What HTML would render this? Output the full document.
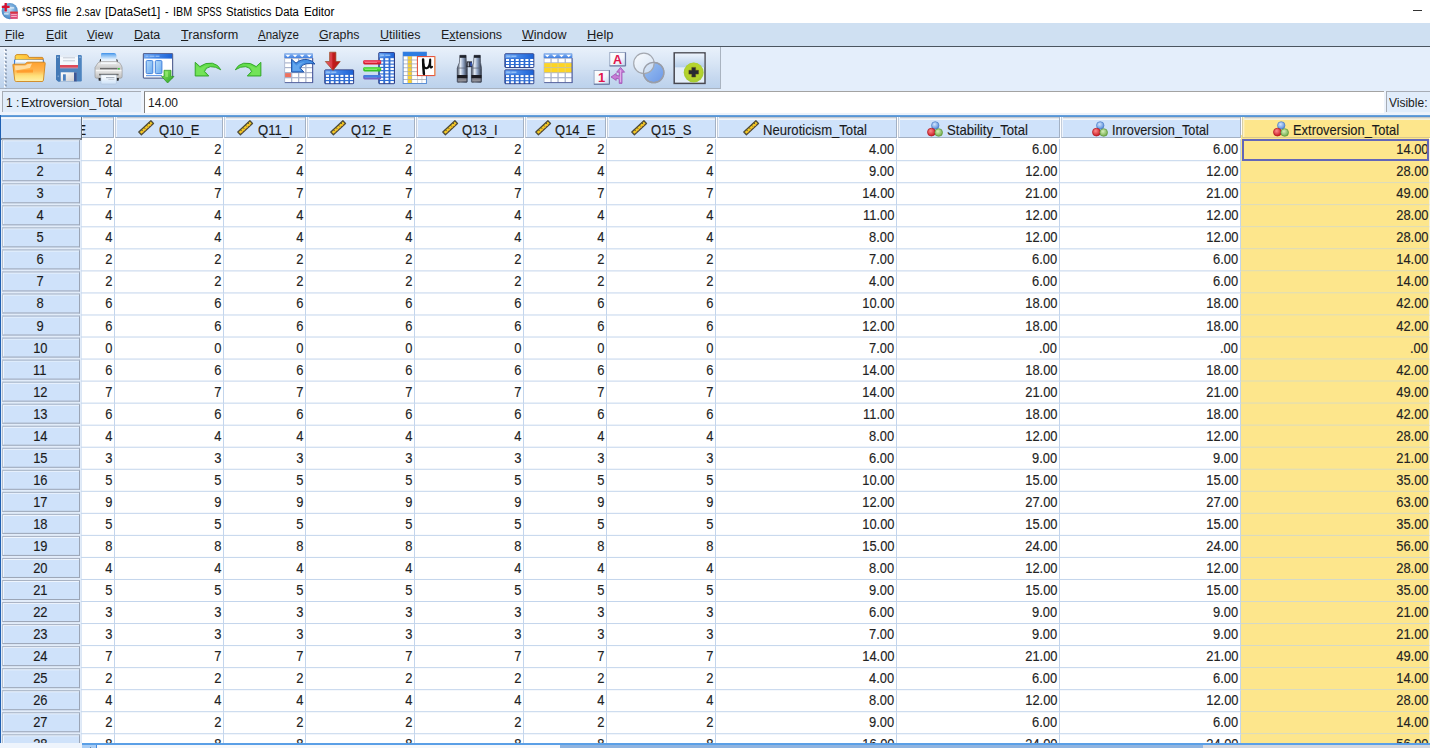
<!DOCTYPE html>
<html><head><meta charset="utf-8"><title>SPSS Data Editor</title>
<style>
*{box-sizing:border-box;margin:0;padding:0}
html,body{width:1430px;height:748px;overflow:hidden;background:#fff}
body{position:relative;font-family:"Liberation Sans",sans-serif;color:#1a1a1a}
#title{position:absolute;left:0;top:0;width:1430px;height:23px;background:#fff}
#title .txt{position:absolute;left:22px;top:5px;font-size:12px;line-height:15px;color:#000;white-space:nowrap;letter-spacing:-0.27px}
#title .tw span{position:absolute;top:5px;font-size:12px;line-height:15px;color:#000;white-space:nowrap;transform-origin:0 50%}
#title .min{position:absolute;left:1413px;top:10px;width:9px;height:1px;background:#333}
#menu{position:absolute;left:0;top:23px;width:1430px;height:23px;background:#cfe0f2}
#menu span{position:absolute;top:5.3px;transform-origin:0 50%;font-size:12px;line-height:15px;color:#1c1c1c;white-space:nowrap}
#menu u{text-decoration:underline;text-underline-offset:1px}
#menuline{position:absolute;left:0;top:46px;width:1430px;height:1.5px;background:#4b5560}
#tbar{position:absolute;left:0;top:47px;width:1430px;height:44.5px;background:#e4eefb}
#tbar .grad{position:absolute;left:0;top:0;width:720.5px;height:42px;background:linear-gradient(#e9f1fb 0%,#d8e5f5 40%,#c6d8ef 75%,#bcd2ec 100%);border-right:1px solid #a9b3c0;border-bottom:1px solid #a9b3c0}
#tbar .grip{position:absolute;left:3.6px;top:2.4px;width:3px;height:40px;background:radial-gradient(circle at 1.9px 1.2px,#8c9cb2 0,#8c9cb2 0.8px,transparent 1.1px),radial-gradient(circle at 1.1px 2px,#ffffff 0,#ffffff 0.8px,transparent 1.1px);background-size:3px 3.95px}
#fbar{position:absolute;left:0;top:91px;width:1430px;height:24px;background:#edf3fc}
#fbar .lab{position:absolute;left:2px;top:0.3px;width:139px;height:21px;background:#e1edfb;border-top:1.2px solid #a6acb5;border-left:1px solid #a6acb5;font-size:12.5px;line-height:21px;padding-left:3.4px;white-space:nowrap;color:#1a1a1a}
#fbar .val{position:absolute;left:144px;top:0.3px;width:1239.5px;height:21.8px;background:#fff;border-left:1px solid #808080;border-top:1.2px solid #a3a3a3;font-size:12.5px;line-height:21px;padding-left:3.4px;color:#1a1a1a}
#fbar .vis{position:absolute;left:1386px;top:0.3px;width:45px;height:21px;background:#e1edfb;border-top:1.2px solid #a6acb5;border-left:1px solid #a6acb5;font-size:12.5px;line-height:21px;padding-left:2.2px;white-space:nowrap;color:#1a1a1a}
#fbar .ft{display:inline-block;transform:scaleX(0.96);transform-origin:0 50%;position:relative;top:0.6px}
#grid{position:absolute;left:0;top:115px;width:1430px;height:633px;background:#fff;overflow:hidden}
#gridtop{position:absolute;left:0;top:114.9px;width:1430px;height:2.2px;background:linear-gradient(#6ea6de,#4f8fd2);z-index:5}
#leftedge{position:absolute;left:0;top:115px;width:1.3px;height:633px;background:#1f60b2;z-index:6}
#vl0{position:absolute;left:81px;top:24px;width:1px;height:604px;background:#dde8f6}
#rhbg{position:absolute;left:1.3px;top:24px;width:79.5px;height:609px;background:#e2ecf9}
.hc{position:absolute;top:1.8px;height:21.3px;background:linear-gradient(#c2c6cc 0,#c8ccd2 1.1px,#f3f7fc 1.7px,#f3f7fc 3px,#cfe2fa 3.5px);border-left:1px solid #c3cddb;box-shadow:inset 1px 0 0 #eef4fc;border-right:1px solid #a3b1c4;border-bottom:1px solid #a3b1c4;font-size:15.0px;line-height:22px;text-align:center;white-space:nowrap;overflow:visible;color:#1a1a1a}
.hc.clip{overflow:hidden}
.hc.sel{background:linear-gradient(#c8c6be 0,#cfcdc4 1.1px,#f8f3dc 1.7px,#f8f3dc 3px,#fde68c 3.5px);border-bottom-color:#d9c98c;border-right:none;border-left-color:#d8cfa4;box-shadow:inset 1.4px 0 0 #fdf2c4}
.hc .hi{display:inline-flex;align-items:center;height:22px;vertical-align:top;position:relative;top:2.3px;left:-0.6px}
.hc .ic{margin-right:4px;flex:none;position:relative;top:-1.3px}
.hc .ic.rl{top:-2.1px;left:0.7px}
.hc .hw{display:inline-block;height:22px;text-align:left;overflow:visible}
.hc .ht{display:inline-block;transform:scale(0.86,1);transform-origin:0 50%;white-space:nowrap;-webkit-text-stroke:0.15px #222}
.hc.clip .ht.r{position:absolute;right:27.3px;top:1.9px;transform-origin:100% 50%}
.corner{position:absolute;left:1.3px;top:1.8px;width:80.6px;height:22.9px;background:linear-gradient(#e4e8ee 0,#f6f9fd 0.8px,#f6f9fd 1.8px,#cfe2fa 2.3px);border-right:1px solid #6a7380;border-bottom:2px solid #7b8490}
.row{position:absolute;left:0;width:1430px;height:22.04px}
.rh{position:absolute;left:2.2px;top:0.4px;width:77.7px;height:19.6px;background:#cfe2fa;border:1px solid #9ba5b6;border-top-color:#a9b3c3;border-left-color:#b6c0ce;box-shadow:inset 1px 1px 0 #eef5fe;font-size:15.0px;line-height:19px;text-align:center;color:#1a1a1a;padding-right:1.6px}
.t{display:inline-block;transform:scale(0.86,1);white-space:nowrap;position:relative;top:-0.8px;-webkit-text-stroke:0.15px #222}
.rh .t{top:-1.0px}
.c .t{transform-origin:100% 50%}
.c{position:absolute;top:0;height:22.04px;border-right:1px solid #c3d5ec;border-bottom:1px solid #c3d5ec;font-size:15.0px;line-height:21.5px;text-align:right;padding-right:1.8px;white-space:nowrap;color:#222}
.c.y{background:#fde68c;border-bottom-color:#d3d9c9;border-right:1px solid #f4f0dc;padding-right:0.8px}
.selcell{position:absolute;left:1242px;top:24px;width:187px;height:22px;border:2px solid #6367b8;z-index:4}
#ybg{position:absolute;left:1241px;top:20px;width:188px;height:613px;background:#fde68c}
#hscroll{position:absolute;left:82px;top:743px;width:1348px;height:5px;background:#f6f8fb;z-index:7;border-top:2px solid #5a9fe6}
#hscroll .thumb{position:absolute;left:478px;top:0;width:643px;height:4px;background:#8fb4e0}
#hscroll .btn{position:absolute;left:0;top:0;width:14.5px;height:4px;background:#a8cdf5;border-right:1px solid #4a8ade}
#hscroll .btn:after{content:"";position:absolute;left:5.5px;top:1.6px;border:3px solid transparent;border-right-color:#2a3a5a;border-left:none}
#hscroll .rt{position:absolute;left:1121px;top:0;width:227px;height:4px;background:#d4d8e0}
#botleft{position:absolute;left:0;top:743.1px;width:82px;height:5px;background:#eef4fc;z-index:7}

</style></head>
<body>
<div id="title">
<svg style="position:absolute;left:0;top:0" width="20" height="22" viewBox="0 0 20 22"><defs><radialGradient id="tg" cx="0.5" cy="0.42" r="0.62"><stop offset="0" stop-color="#c4dcf2"/><stop offset="0.55" stop-color="#6ea6d8"/><stop offset="1" stop-color="#3f7cbc"/></radialGradient></defs><circle cx="9.7" cy="11.1" r="8.1" fill="url(#tg)"/><path d="M8 7.9h6.2M4 13.9h4.6M4.4 11.8h3" stroke="#eef5fc" stroke-width="1.1" opacity="0.9"/><rect x="10.3" y="11.7" width="7.5" height="7.2" fill="#e04a78"/><rect x="10.3" y="11.7" width="7.5" height="1.6" fill="#d8363e"/><path d="M11.2 14.6h5.6M11.2 16.5h5.6" stroke="#f6c0d0" stroke-width="0.9"/><path d="M5.7 3v8.5M1.8 6.95h7.8" stroke="#d8102e" stroke-width="2.3"/></svg>
<div class="tw"><span style="left:22.1px;transform:scaleX(0.800)">*SPSS</span><span style="left:55.7px;transform:scaleX(1.000)">file</span><span style="left:75.6px;transform:scaleX(0.858)">2.sav</span><span style="left:104.8px;transform:scaleX(0.975)">[DataSet1]</span><span style="left:164.9px;transform:scaleX(0.900)">-</span><span style="left:172.5px;transform:scaleX(0.897)">IBM</span><span style="left:196.5px;transform:scaleX(0.770)">SPSS</span><span style="left:225.5px;transform:scaleX(0.944)">Statistics</span><span style="left:275.4px;transform:scaleX(0.940)">Data</span><span style="left:304.4px;transform:scaleX(0.968)">Editor</span></div>
<div class="min"></div>
</div>
<div id="menu">
<span style="left:5px;transform:scaleX(1.0)"><u>F</u>ile</span>
<span style="left:46px;transform:scaleX(1.02)"><u>E</u>dit</span>
<span style="left:87px;transform:scaleX(1.0)"><u>V</u>iew</span>
<span style="left:133.8px;transform:scaleX(1.037)"><u>D</u>ata</span>
<span style="left:180.8px;transform:scaleX(1.054)"><u>T</u>ransform</span>
<span style="left:258.3px;transform:scaleX(0.96)"><u>A</u>nalyze</span>
<span style="left:319.4px;transform:scaleX(1.028)"><u>G</u>raphs</span>
<span style="left:380.3px;transform:scaleX(1.045)"><u>U</u>tilities</span>
<span style="left:441px;transform:scaleX(1.04)">E<u>x</u>tensions</span>
<span style="left:522.3px;transform:scaleX(1.04)"><u>W</u>indow</span>
<span style="left:587.2px;transform:scaleX(1.07)"><u>H</u>elp</span>
</div>
<div id="menuline"></div>
<div id="tbar"><div class="grad"></div><div class="grip"></div></div>
<div id="fbar"><div class="lab"><span class="ft">1 :</span><span class="ft" style="position:absolute;left:18.2px;top:0.6px;transform:scaleX(0.985)">Extroversion_Total</span></div><div class="val"><span class="ft">14.00</span></div><div class="vis"><span class="ft">Visible:</span></div></div>
<div id="gridtop"></div><div id="leftedge"></div>
<svg id="icons" style="position:absolute;left:0;top:47px" width="730" height="44" viewBox="0 47 730 44">
<defs>
<linearGradient id="fo" x1="0" y1="0" x2="0" y2="1"><stop offset="0" stop-color="#ffa02e"/><stop offset="0.45" stop-color="#ffb650"/><stop offset="0.7" stop-color="#ffe07a"/><stop offset="1" stop-color="#fff0a8"/></linearGradient>
<linearGradient id="fb" x1="0" y1="0" x2="1" y2="0"><stop offset="0" stop-color="#ffd94a"/><stop offset="1" stop-color="#ffa228"/></linearGradient>
<linearGradient id="pp" x1="0" y1="0" x2="0" y2="1"><stop offset="0" stop-color="#3d8fe8"/><stop offset="0.18" stop-color="#7ab6f2"/><stop offset="0.6" stop-color="#e4f1fd"/><stop offset="1" stop-color="#ffffff"/></linearGradient>
<linearGradient id="pb" x1="0" y1="0" x2="0" y2="1"><stop offset="0" stop-color="#f2f2f2"/><stop offset="0.4" stop-color="#c9c9c9"/><stop offset="0.55" stop-color="#e6e6e6"/><stop offset="1" stop-color="#bdbdbd"/></linearGradient>
<linearGradient id="po" x1="0" y1="0" x2="0" y2="1"><stop offset="0" stop-color="#ffffff"/><stop offset="1" stop-color="#cfe3f8"/></linearGradient>
<linearGradient id="th" x1="0" y1="0" x2="1" y2="0"><stop offset="0" stop-color="#6ea6f2"/><stop offset="0.5" stop-color="#3f82e6"/><stop offset="1" stop-color="#1c62d6"/></linearGradient>
<linearGradient id="gh" x1="0" y1="0" x2="0" y2="1"><stop offset="0" stop-color="#8db8f2"/><stop offset="1" stop-color="#3f7ee0"/></linearGradient>
<linearGradient id="bp" x1="0" y1="0" x2="1" y2="1"><stop offset="0" stop-color="#b8dcfa"/><stop offset="1" stop-color="#6aaaf0"/></linearGradient>
<linearGradient id="ga" x1="0" y1="0" x2="1" y2="1"><stop offset="0" stop-color="#8aea5e"/><stop offset="1" stop-color="#2aa026"/></linearGradient>
<linearGradient id="ra" x1="0" y1="0" x2="1" y2="0"><stop offset="0" stop-color="#e8606a"/><stop offset="0.45" stop-color="#d83a44"/><stop offset="0.5" stop-color="#c01c1c"/><stop offset="1" stop-color="#b81818"/></linearGradient>
<linearGradient id="bn" x1="0" y1="0" x2="1" y2="0"><stop offset="0" stop-color="#3e4656"/><stop offset="0.32" stop-color="#e4ecf6"/><stop offset="0.6" stop-color="#8ea2c2"/><stop offset="1" stop-color="#2e3644"/></linearGradient>
<linearGradient id="c1" x1="0" y1="0" x2="1" y2="1"><stop offset="0" stop-color="#ffffff"/><stop offset="1" stop-color="#d4e2f4"/></linearGradient>
<linearGradient id="c2" x1="0" y1="0" x2="1" y2="1"><stop offset="0" stop-color="#9cc2f0"/><stop offset="1" stop-color="#6c98e8"/></linearGradient>
<linearGradient id="sb" x1="0" y1="0" x2="0" y2="1"><stop offset="0" stop-color="#ecf3fc"/><stop offset="1" stop-color="#b4cde9"/></linearGradient>
<linearGradient id="lb" x1="0" y1="0" x2="1" y2="1"><stop offset="0" stop-color="#ffffff"/><stop offset="0.6" stop-color="#f2f6fc"/><stop offset="1" stop-color="#c2d4ec"/></linearGradient>
<linearGradient id="sh" x1="0" y1="0" x2="1" y2="1"><stop offset="0" stop-color="#ffffff"/><stop offset="1" stop-color="#c8c8cc"/></linearGradient>
</defs>
<g>
<path d="M15.2 59.5 L15.2 56.4 Q15.4 54.8 17 54.6 L26.6 54.6 Q27.8 54.8 28.2 56 L28.8 57.4 L42.2 57.4 Q43.2 57.6 43.2 58.6 L43.2 62 L15.2 62Z" fill="url(#fb)" stroke="#c9821c" stroke-width="0.9"/>
<path d="M14 59.6 L43.8 59.6 L43.8 65 L14 65Z" fill="#3b82dd"/>
<path d="M15.2 60 L42.8 60 L42.8 64.6 L15.2 64.6Z" fill="#f4f9ff"/>
<path d="M15.2 62.2 L42.8 62.2 L42.8 64.6 L15.2 64.6Z" fill="#cfe4f8"/>
<path d="M13.2 64.2 L24.2 64.2 Q25.4 64 26 63.2 Q26.6 62.3 27.8 62.2 L44.4 62.2 Q45.4 62.4 45.2 63.4 L43.4 80.4 Q43.2 81.5 42 81.5 L16.2 81.5 Q15 81.5 14.8 80.4 L12.9 65.2 Q12.8 64.3 13.2 64.2Z" fill="url(#fo)" stroke="#cf861c" stroke-width="0.9"/>
<path d="M14.6 65.6 L24.6 65.6 Q26.2 65.4 27 64.2 L32 63.6 L30 68 L15.4 70.5Z" fill="#ffe9b8" opacity="0.8"/>
<path d="M16.4 70.6 L33 69.4 L33 72.4 L16.8 72.8Z" fill="#ff9a2a" opacity="0.9"/>
</g>
<g>
<path d="M57.2 55 L80.6 55 Q81.8 55 81.8 56.2 L81.8 80.2 Q81.8 81.4 80.6 81.4 L58.2 81.4 L56 79.4 L56 56.2 Q56 55 57.2 55Z" fill="#4e84bf"/>
<path d="M56 57 L56 79.4 L58.2 81.4 L60 81.4 L60 55 L57.2 55 Q56 55 56 56.2Z" fill="#4379b6"/>
<rect x="60" y="55" width="18" height="10" fill="#f4f8fd"/>
<rect x="60" y="55" width="18" height="2" fill="#e4ecf6"/>
<path d="M63 57.8h12M63 60.8h12" stroke="#c2c9d4" stroke-width="1"/>
<rect x="60" y="65" width="18" height="2.8" fill="#de4858"/>
<rect x="60" y="67.6" width="18" height="0.7" fill="#f0a0a8"/>
<rect x="60.8" y="72.3" width="15.8" height="9.1" fill="url(#sh)"/>
<rect x="74" y="72.3" width="2.8" height="9.1" fill="#3a5696"/>
<rect x="63" y="74.3" width="2.8" height="6.4" fill="#4a80c0"/>
<rect x="57.2" y="56.6" width="1.3" height="1.3" fill="#a9c6e6"/><rect x="79.3" y="56.6" width="1.3" height="1.3" fill="#a9c6e6"/><rect x="57.6" y="75.5" width="1.2" height="1.6" fill="#7fa8d6"/>
</g>
<g>
<path d="M99.6 61 L100.4 59 L101.2 59 L101.2 63 L99.6 63Z M117.8 61 L117 59 L116.2 59 L116.2 63 L117.8 63Z" fill="#2a2a2a"/>
<path d="M101 54.2 Q101 53 102.2 53 L114.2 53 Q116.4 53.4 116.4 55.4 L116.4 63.6 L101 63.6Z" fill="url(#pp)"/>
<path d="M96 66 Q97.5 61.8 101 61.6 L116.6 61.6 Q120.4 62 121.6 66 L122.1 67.5 L122.1 76.6 Q122.1 78.2 120.6 78.2 L96.5 78.2 Q95 78.2 95 76.6 L95 67.5Z" fill="url(#pb)" stroke="#8f8f8f" stroke-width="0.6"/>
<path d="M101 63.2 L116.4 63.2" stroke="#f8fbff" stroke-width="1.2"/>
<path d="M100 68.6 L117.4 68.6" stroke="#6c6c6c" stroke-width="1.4"/>
<path d="M96 70.6 L121.4 70.6" stroke="#fafafa" stroke-width="0.9"/>
<rect x="117.8" y="68" width="2" height="1.6" fill="#3fc040"/>
<rect x="99" y="73.8" width="19.6" height="1.6" fill="#6e6e6e"/>
<path d="M98.6 78 L100.8 78 L100.8 81 L98.6 80.4Z M118.8 78 L116.6 78 L116.6 81 L118.8 80.4Z" fill="#2a2a2a"/>
<path d="M101 75 L116.4 75 L116.4 83.2 Q116.4 84 115.4 84 L102 84 Q101 84 101 83.2Z" fill="url(#po)" stroke="#a8bcd4" stroke-width="0.5"/>
<path d="M106 77.6h8.4" stroke="#9aa4b2" stroke-width="0.9"/><path d="M108.4 79.4h6" stroke="#c0c8d4" stroke-width="0.8"/>
</g>
<g>
<rect x="143.4" y="53.5" width="29.2" height="24.6" rx="0.8" fill="#ffffff" stroke="#5a6896" stroke-width="1.2"/>
<rect x="144" y="54" width="28" height="4.6" fill="url(#th)"/>
<path d="M145.5 56.2h3M149.5 56.2h5M155.5 56.2h4" stroke="#9cc4f6" stroke-width="1.6" opacity="0.8"/>
<rect x="146.2" y="60.6" width="6.6" height="13" rx="1" fill="url(#bp)" stroke="#3f80dc" stroke-width="1"/>
<rect x="155.3" y="60.6" width="6.6" height="13" rx="1" fill="url(#bp)" stroke="#3f80dc" stroke-width="1"/>
<path d="M146 75.7h16" stroke="#4a88e0" stroke-width="1"/>
<path d="M164 70.3 L171 70.3 L171 76.4 L174 76.4 L167.6 83 L161.6 76.4 L164 76.4Z" fill="url(#ga)" stroke="#2b9224" stroke-width="0.7"/>
<path d="M165.2 71.4 L168 71.4 L168 77 L165.4 77Z" fill="#a4f27e" opacity="0.6"/>
</g>
<path d="M195.2 62.3 L195.2 76 L208.8 76 L204.6 71.4 Q205.6 67.4 210.4 66.7 Q215.4 66.2 220.8 69.8 Q218.4 64.6 212.4 63.2 Q205.4 62.2 199.9 66.6Z" fill="#62dc4a" stroke="#2fa226" stroke-width="0.9" stroke-linejoin="round"/>
<path d="M196.2 65 L196.2 75 L206 75 L203.4 71.6 Q204.6 67 209.6 65.6 Q205 64.6 200.2 68.2Z" fill="#7be65e" opacity="0.7"/>
<g transform="translate(456.1 0) scale(-1 1)"><path d="M195.2 62.3 L195.2 76 L208.8 76 L204.6 71.4 Q205.6 67.4 210.4 66.7 Q215.4 66.2 220.8 69.8 Q218.4 64.6 212.4 63.2 Q205.4 62.2 199.9 66.6Z" fill="#62dc4a" stroke="#2fa226" stroke-width="0.9" stroke-linejoin="round"/><path d="M196.2 65 L196.2 75 L206 75 L203.4 71.6 Q204.6 67 209.6 65.6 Q205 64.6 200.2 68.2Z" fill="#7be65e" opacity="0.7"/></g>
<rect x="284.3" y="53.3" width="28.6" height="29.6" rx="0.8" fill="#aab4cc"/>
<rect x="284.3" y="53.3" width="28.6" height="4.8" rx="0.8" fill="url(#gh)"/>
<path d="M285.5 54.8 L290.3 54.8 L287.9 57.2Z" fill="#ffffff"/>
<path d="M292.6 54.8 L297.4 54.8 L295.0 57.2Z" fill="#ffffff"/>
<path d="M299.7 54.8 L304.5 54.8 L302.1 57.2Z" fill="#ffffff"/>
<path d="M306.9 54.8 L311.7 54.8 L309.3 57.2Z" fill="#ffffff"/>
<rect x="285.10" y="58.80" width="5.90" height="3.50" fill="#ffffff"/>
<rect x="292.30" y="58.80" width="5.70" height="3.50" fill="#ffffff"/>
<rect x="299.30" y="58.80" width="5.90" height="3.50" fill="#ffffff"/>
<rect x="306.50" y="58.80" width="5.90" height="3.50" fill="#ffffff"/>
<rect x="285.10" y="63.50" width="5.90" height="3.50" fill="#ffffff"/>
<rect x="292.30" y="63.50" width="5.70" height="3.50" fill="#ffffff"/>
<rect x="299.30" y="63.50" width="5.90" height="3.50" fill="#ffffff"/>
<rect x="306.50" y="63.50" width="5.90" height="3.50" fill="#ffffff"/>
<rect x="285.10" y="68.20" width="5.90" height="3.80" fill="#ffffff"/>
<rect x="292.30" y="68.20" width="5.70" height="3.80" fill="#ffffff"/>
<rect x="299.30" y="68.20" width="5.90" height="3.80" fill="#ffffff"/>
<rect x="306.50" y="68.20" width="5.90" height="3.80" fill="#ffffff"/>
<rect x="285.10" y="73.20" width="5.90" height="3.90" fill="#f0705c"/>
<rect x="292.30" y="73.20" width="5.70" height="3.90" fill="#ffffff"/>
<rect x="299.30" y="73.20" width="5.90" height="3.90" fill="#ffffff"/>
<rect x="306.50" y="73.20" width="5.90" height="3.90" fill="#ffffff"/>
<rect x="285.10" y="78.30" width="5.90" height="4.10" fill="#ffffff"/>
<rect x="292.30" y="78.30" width="5.70" height="4.10" fill="#ffffff"/>
<rect x="299.30" y="78.30" width="5.90" height="4.10" fill="#ffffff"/>
<rect x="306.50" y="78.30" width="5.90" height="4.10" fill="#ffffff"/>
<path d="M312.7 58.1 V82.9" stroke="#3c4c96" stroke-width="1"/>
<path d="M284.8 82.6 H312.9" stroke="#4c5a9a" stroke-width="0.9"/>
<path d="M291.6 59.2 L291.6 72 L303.8 72 L300.4 68.2 Q301.8 64.6 306 63.8 Q310.6 63.2 315 64 Q312.6 60.4 307.4 59.6 Q300.6 58.8 296 63.2Z" fill="#4690e4" stroke="#1f52a8" stroke-width="1" stroke-linejoin="round"/>
<path d="M292.8 62 L292.8 70.8 L301 70.8 L298.8 68 Q300 64 304.6 62.4 Q300.2 61.8 296.4 65.4Z" fill="#72b0f2" opacity="0.7"/>
<rect x="324.8" y="69.9" width="28.8" height="13.8" rx="0.6" fill="#2e6cd2" stroke="#2c3c84" stroke-width="1"/>
<rect x="325.3" y="70.4" width="27.8" height="3.8" fill="url(#th)"/>
<path d="M326.3 72.2h4M331.3 72.2h5" stroke="#a4ccf8" stroke-width="1.5" opacity="0.75"/>
<rect x="325.90" y="74.90" width="3.10" height="2.00" fill="#ffffff"/>
<rect x="330.72" y="74.90" width="3.10" height="2.00" fill="#ffffff"/>
<rect x="335.53" y="74.90" width="3.10" height="2.00" fill="#ffffff"/>
<rect x="340.35" y="74.90" width="3.10" height="2.00" fill="#ffffff"/>
<rect x="345.17" y="74.90" width="3.10" height="2.00" fill="#ffffff"/>
<rect x="349.98" y="74.90" width="3.10" height="2.00" fill="#ffffff"/>
<rect x="325.90" y="78.03" width="3.10" height="2.00" fill="#ffffff"/>
<rect x="330.72" y="78.03" width="3.10" height="2.00" fill="#ffffff"/>
<rect x="335.53" y="78.03" width="3.10" height="2.00" fill="#ffffff"/>
<rect x="340.35" y="78.03" width="3.10" height="2.00" fill="#ffffff"/>
<rect x="345.17" y="78.03" width="3.10" height="2.00" fill="#ffffff"/>
<rect x="349.98" y="78.03" width="3.10" height="2.00" fill="#ffffff"/>
<rect x="325.90" y="81.17" width="3.10" height="2.00" fill="#ffffff"/>
<rect x="330.72" y="81.17" width="3.10" height="2.00" fill="#ffffff"/>
<rect x="335.53" y="81.17" width="3.10" height="2.00" fill="#ffffff"/>
<rect x="340.35" y="81.17" width="3.10" height="2.00" fill="#ffffff"/>
<rect x="345.17" y="81.17" width="3.10" height="2.00" fill="#ffffff"/>
<rect x="349.98" y="81.17" width="3.10" height="2.00" fill="#ffffff"/>
<path d="M329.6 52.2 L335.9 52.2 L335.9 61.5 L340.2 61.5 L333 70.4 L325.3 61.5 L329.6 61.5Z" fill="url(#ra)" stroke="#9a4a22" stroke-width="0.7" stroke-linejoin="round"/>
<rect x="378.8" y="52.6" width="15.7" height="31.1" rx="0.6" fill="#2e6cd2" stroke="#2c3c84" stroke-width="1"/>
<rect x="379.3" y="53.1" width="14.7" height="4.4" fill="url(#th)"/>
<path d="M380.3 55.2h4M385.3 55.2h5" stroke="#a4ccf8" stroke-width="1.5" opacity="0.75"/>
<rect x="379.90" y="58.20" width="3.40" height="2.10" fill="#ffffff"/>
<rect x="385.17" y="58.20" width="3.40" height="2.10" fill="#ffffff"/>
<rect x="390.43" y="58.20" width="3.40" height="2.10" fill="#ffffff"/>
<rect x="379.90" y="61.46" width="3.40" height="2.10" fill="#ffffff"/>
<rect x="385.17" y="61.46" width="3.40" height="2.10" fill="#ffffff"/>
<rect x="390.43" y="61.46" width="3.40" height="2.10" fill="#ffffff"/>
<rect x="379.90" y="64.73" width="3.40" height="2.10" fill="#ffffff"/>
<rect x="385.17" y="64.73" width="3.40" height="2.10" fill="#ffffff"/>
<rect x="390.43" y="64.73" width="3.40" height="2.10" fill="#ffffff"/>
<rect x="379.90" y="67.99" width="3.40" height="2.10" fill="#ffffff"/>
<rect x="385.17" y="67.99" width="3.40" height="2.10" fill="#ffffff"/>
<rect x="390.43" y="67.99" width="3.40" height="2.10" fill="#ffffff"/>
<rect x="379.90" y="71.25" width="3.40" height="2.10" fill="#ffffff"/>
<rect x="385.17" y="71.25" width="3.40" height="2.10" fill="#ffffff"/>
<rect x="390.43" y="71.25" width="3.40" height="2.10" fill="#ffffff"/>
<rect x="379.90" y="74.51" width="3.40" height="2.10" fill="#ffffff"/>
<rect x="385.17" y="74.51" width="3.40" height="2.10" fill="#ffffff"/>
<rect x="390.43" y="74.51" width="3.40" height="2.10" fill="#ffffff"/>
<rect x="379.90" y="77.78" width="3.40" height="2.10" fill="#ffffff"/>
<rect x="385.17" y="77.78" width="3.40" height="2.10" fill="#ffffff"/>
<rect x="390.43" y="77.78" width="3.40" height="2.10" fill="#ffffff"/>
<rect x="379.90" y="81.04" width="3.40" height="2.10" fill="#ffffff"/>
<rect x="385.17" y="81.04" width="3.40" height="2.10" fill="#ffffff"/>
<rect x="390.43" y="81.04" width="3.40" height="2.10" fill="#ffffff"/>
<rect x="363.2" y="60.2" width="18" height="4.3" rx="1.4" fill="#d41c2c"/>
<rect x="363.6" y="60.4" width="17.2" height="2.2" rx="1.1" fill="#f2486a"/>
<path d="M365 62.4h12" stroke="#ffa0a8" stroke-width="0.8" opacity="0.8"/>
<rect x="363.2" y="67.2" width="18" height="4.3" rx="1.4" fill="#34c226"/>
<rect x="363.6" y="67.4" width="17.2" height="2.2" rx="1.1" fill="#5ee048"/>
<path d="M365 69.4h12" stroke="#b0f49c" stroke-width="0.8" opacity="0.8"/>
<rect x="363.2" y="75.1" width="18" height="4.3" rx="1.4" fill="#7462c4"/>
<rect x="363.6" y="75.3" width="17.2" height="2.2" rx="1.1" fill="#3d82e4"/>
<path d="M365 77.3h12" stroke="#7a90e0" stroke-width="0.8" opacity="0.8"/>
<rect x="403.1" y="52.1" width="23.3" height="31.5" fill="#a4a8b0" stroke="#4a86d8" stroke-width="0.8"/>
<rect x="403.1" y="52.1" width="23.3" height="3.9" fill="#2c7ce2"/>
<rect x="403.70" y="56.50" width="3.80" height="3.1" fill="#ffffff"/>
<rect x="408.00" y="56.50" width="3.60" height="3.1" fill="#f8d232"/>
<rect x="412.10" y="56.50" width="4.90" height="3.1" fill="#ffffff"/>
<rect x="417.50" y="56.50" width="4.20" height="3.1" fill="#ffffff"/>
<rect x="422.20" y="56.50" width="3.70" height="3.1" fill="#ffffff"/>
<rect x="403.70" y="60.40" width="3.80" height="3.1" fill="#ffffff"/>
<rect x="408.00" y="60.40" width="3.60" height="3.1" fill="#f8d232"/>
<rect x="412.10" y="60.40" width="4.90" height="3.1" fill="#ffffff"/>
<rect x="417.50" y="60.40" width="4.20" height="3.1" fill="#ffffff"/>
<rect x="422.20" y="60.40" width="3.70" height="3.1" fill="#ffffff"/>
<rect x="403.70" y="64.30" width="3.80" height="3.1" fill="#ffffff"/>
<rect x="408.00" y="64.30" width="3.60" height="3.1" fill="#f8d232"/>
<rect x="412.10" y="64.30" width="4.90" height="3.1" fill="#ffffff"/>
<rect x="417.50" y="64.30" width="4.20" height="3.1" fill="#ffffff"/>
<rect x="422.20" y="64.30" width="3.70" height="3.1" fill="#ffffff"/>
<rect x="403.70" y="68.20" width="3.80" height="3.1" fill="#ffffff"/>
<rect x="408.00" y="68.20" width="3.60" height="3.1" fill="#f8d232"/>
<rect x="412.10" y="68.20" width="4.90" height="3.1" fill="#ffffff"/>
<rect x="417.50" y="68.20" width="4.20" height="3.1" fill="#ffffff"/>
<rect x="422.20" y="68.20" width="3.70" height="3.1" fill="#ffffff"/>
<rect x="403.70" y="72.10" width="3.80" height="3.1" fill="#ffffff"/>
<rect x="408.00" y="72.10" width="3.60" height="3.1" fill="#f8d232"/>
<rect x="412.10" y="72.10" width="4.90" height="3.1" fill="#ffffff"/>
<rect x="417.50" y="72.10" width="4.20" height="3.1" fill="#ffffff"/>
<rect x="422.20" y="72.10" width="3.70" height="3.1" fill="#ffffff"/>
<rect x="403.70" y="76.00" width="3.80" height="3.1" fill="#ffffff"/>
<rect x="408.00" y="76.00" width="3.60" height="3.1" fill="#f8d232"/>
<rect x="412.10" y="76.00" width="4.90" height="3.1" fill="#ffffff"/>
<rect x="417.50" y="76.00" width="4.20" height="3.1" fill="#ffffff"/>
<rect x="422.20" y="76.00" width="3.70" height="3.1" fill="#ffffff"/>
<rect x="403.70" y="79.90" width="3.80" height="3.1" fill="#ffffff"/>
<rect x="408.00" y="79.90" width="3.60" height="3.1" fill="#f8d232"/>
<rect x="412.10" y="79.90" width="4.90" height="3.1" fill="#ffffff"/>
<rect x="417.50" y="79.90" width="4.20" height="3.1" fill="#ffffff"/>
<rect x="422.20" y="79.90" width="3.70" height="3.1" fill="#ffffff"/>
<rect x="417.4" y="56.6" width="17.4" height="19" fill="#ffffff" stroke="#e4442e" stroke-width="1"/>
<path d="M434.8 56.6V75.6" stroke="#f0a25e" stroke-width="1"/>
<path d="M423.1 59.4 Q423.2 67 423.9 74" stroke="#0c0c0c" stroke-width="2.5" stroke-linecap="round" fill="none"/>
<path d="M423.4 64 Q423.6 68.4 426.6 68.2 Q429.8 67.6 430.2 59.6 Q430 66.4 430.6 67.2 Q431.2 67.8 432 66.8" stroke="#0c0c0c" stroke-width="2.1" stroke-linecap="round" stroke-linejoin="round" fill="none"/>
<path d="M459.8 55.3 L466.1 55.3 L466.3 62.5 Q467.1 66 467.3 68.4 L467.3 81.6 Q467.3 82.4 466.5 82.4 L458.0 82.4 Q457.2 82.4 457.2 81.6 L457.2 68.4 Q457.8 66 459.4 62.5Z" fill="url(#bn)" stroke="#3a4250" stroke-width="0.6"/>
<rect x="459.8" y="55.2" width="6.3" height="2.6" fill="#20242c"/>
<rect x="457.2" y="67.6" width="10.1" height="0.9" fill="#5a6274" opacity="0.8"/>
<rect x="457.2" y="75" width="10.1" height="3.2" fill="#1c1c22"/>
<rect x="458.1" y="78.2" width="8.3" height="3.6" fill="#4e4e56"/>
<path d="M458.1 79.2h8.3M458.1 80.7h8.3" stroke="#b4b4bc" stroke-width="0.8"/>
<path d="M474.0 55.3 L480.3 55.3 L480.5 62.5 Q481.3 66 481.5 68.4 L481.5 81.6 Q481.5 82.4 480.7 82.4 L472.2 82.4 Q471.4 82.4 471.4 81.6 L471.4 68.4 Q472.0 66 473.6 62.5Z" fill="url(#bn)" stroke="#3a4250" stroke-width="0.6"/>
<rect x="474.0" y="55.2" width="6.3" height="2.6" fill="#20242c"/>
<rect x="471.4" y="67.6" width="10.1" height="0.9" fill="#5a6274" opacity="0.8"/>
<rect x="471.4" y="75" width="10.1" height="3.2" fill="#1c1c22"/>
<rect x="472.3" y="78.2" width="8.3" height="3.6" fill="#4e4e56"/>
<path d="M472.3 79.2h8.3M472.3 80.7h8.3" stroke="#b4b4bc" stroke-width="0.8"/>
<rect x="466.6" y="61.4" width="5.4" height="5.8" fill="#1c1e26"/>
<rect x="467.6" y="62.4" width="1.6" height="4" fill="#9aa2b4"/>
<rect x="470.2" y="62.4" width="1.8" height="4" fill="#3858b0"/>
<rect x="504.9" y="53.8" width="28.9" height="13.6" rx="0.6" fill="#2e6cd2" stroke="#2c3c84" stroke-width="1"/>
<rect x="505.4" y="54.3" width="27.9" height="4.0" fill="url(#th)"/>
<path d="M506.4 56.2h4M511.4 56.2h5" stroke="#a4ccf8" stroke-width="1.5" opacity="0.75"/>
<rect x="506.00" y="59.00" width="3.10" height="2.00" fill="#ffffff"/>
<rect x="510.83" y="59.00" width="3.10" height="2.00" fill="#ffffff"/>
<rect x="515.67" y="59.00" width="3.10" height="2.00" fill="#ffffff"/>
<rect x="520.50" y="59.00" width="3.10" height="2.00" fill="#ffffff"/>
<rect x="525.33" y="59.00" width="3.10" height="2.00" fill="#ffffff"/>
<rect x="530.17" y="59.00" width="3.10" height="2.00" fill="#ffffff"/>
<rect x="506.00" y="62.00" width="3.10" height="2.00" fill="#ffffff"/>
<rect x="510.83" y="62.00" width="3.10" height="2.00" fill="#ffffff"/>
<rect x="515.67" y="62.00" width="3.10" height="2.00" fill="#ffffff"/>
<rect x="520.50" y="62.00" width="3.10" height="2.00" fill="#ffffff"/>
<rect x="525.33" y="62.00" width="3.10" height="2.00" fill="#ffffff"/>
<rect x="530.17" y="62.00" width="3.10" height="2.00" fill="#ffffff"/>
<rect x="506.00" y="65.00" width="3.10" height="2.00" fill="#ffffff"/>
<rect x="510.83" y="65.00" width="3.10" height="2.00" fill="#ffffff"/>
<rect x="515.67" y="65.00" width="3.10" height="2.00" fill="#ffffff"/>
<rect x="520.50" y="65.00" width="3.10" height="2.00" fill="#ffffff"/>
<rect x="525.33" y="65.00" width="3.10" height="2.00" fill="#ffffff"/>
<rect x="530.17" y="65.00" width="3.10" height="2.00" fill="#ffffff"/>
<rect x="504.9" y="69.9" width="28.9" height="13.8" rx="0.6" fill="#2e6cd2" stroke="#2c3c84" stroke-width="1"/>
<rect x="505.4" y="70.4" width="27.9" height="4.0" fill="url(#th)"/>
<path d="M506.4 72.3h4M511.4 72.3h5" stroke="#a4ccf8" stroke-width="1.5" opacity="0.75"/>
<rect x="506.00" y="75.10" width="3.10" height="2.00" fill="#ffffff"/>
<rect x="510.83" y="75.10" width="3.10" height="2.00" fill="#ffffff"/>
<rect x="515.67" y="75.10" width="3.10" height="2.00" fill="#ffffff"/>
<rect x="520.50" y="75.10" width="3.10" height="2.00" fill="#ffffff"/>
<rect x="525.33" y="75.10" width="3.10" height="2.00" fill="#ffffff"/>
<rect x="530.17" y="75.10" width="3.10" height="2.00" fill="#ffffff"/>
<rect x="506.00" y="78.17" width="3.10" height="2.00" fill="#ffffff"/>
<rect x="510.83" y="78.17" width="3.10" height="2.00" fill="#ffffff"/>
<rect x="515.67" y="78.17" width="3.10" height="2.00" fill="#ffffff"/>
<rect x="520.50" y="78.17" width="3.10" height="2.00" fill="#ffffff"/>
<rect x="525.33" y="78.17" width="3.10" height="2.00" fill="#ffffff"/>
<rect x="530.17" y="78.17" width="3.10" height="2.00" fill="#ffffff"/>
<rect x="506.00" y="81.23" width="3.10" height="2.00" fill="#ffffff"/>
<rect x="510.83" y="81.23" width="3.10" height="2.00" fill="#ffffff"/>
<rect x="515.67" y="81.23" width="3.10" height="2.00" fill="#ffffff"/>
<rect x="520.50" y="81.23" width="3.10" height="2.00" fill="#ffffff"/>
<rect x="525.33" y="81.23" width="3.10" height="2.00" fill="#ffffff"/>
<rect x="530.17" y="81.23" width="3.10" height="2.00" fill="#ffffff"/>
<rect x="543.7" y="53.3" width="28.6" height="29.6" rx="0.8" fill="#aab4cc"/>
<rect x="543.7" y="53.3" width="28.6" height="4.8" rx="0.8" fill="url(#gh)"/>
<path d="M544.9 54.8 L549.7 54.8 L547.3 57.2Z" fill="#ffffff"/>
<path d="M552.0 54.8 L556.8 54.8 L554.4 57.2Z" fill="#ffffff"/>
<path d="M559.1 54.8 L563.9 54.8 L561.5 57.2Z" fill="#ffffff"/>
<path d="M566.3 54.8 L571.1 54.8 L568.7 57.2Z" fill="#ffffff"/>
<rect x="544.20" y="63.10" width="27.6" height="4.30" fill="#f2d458"/>
<rect x="544.20" y="67.80" width="27.6" height="4.60" fill="#f2d458"/>
<rect x="544.50" y="58.80" width="5.90" height="3.50" fill="#ffffff"/>
<rect x="551.70" y="58.80" width="5.70" height="3.50" fill="#ffffff"/>
<rect x="558.70" y="58.80" width="5.90" height="3.50" fill="#ffffff"/>
<rect x="565.90" y="58.80" width="5.90" height="3.50" fill="#ffffff"/>
<rect x="544.50" y="63.50" width="5.90" height="3.50" fill="#fdd524"/>
<rect x="551.70" y="63.50" width="5.70" height="3.50" fill="#fdd524"/>
<rect x="558.70" y="63.50" width="5.90" height="3.50" fill="#fdd524"/>
<rect x="565.90" y="63.50" width="5.90" height="3.50" fill="#fdd524"/>
<rect x="544.50" y="68.20" width="5.90" height="3.80" fill="#fdd524"/>
<rect x="551.70" y="68.20" width="5.70" height="3.80" fill="#fdd524"/>
<rect x="558.70" y="68.20" width="5.90" height="3.80" fill="#fdd524"/>
<rect x="565.90" y="68.20" width="5.90" height="3.80" fill="#fdd524"/>
<rect x="544.50" y="73.20" width="5.90" height="3.90" fill="#ffffff"/>
<rect x="551.70" y="73.20" width="5.70" height="3.90" fill="#ffffff"/>
<rect x="558.70" y="73.20" width="5.90" height="3.90" fill="#ffffff"/>
<rect x="565.90" y="73.20" width="5.90" height="3.90" fill="#ffffff"/>
<rect x="544.50" y="78.30" width="5.90" height="4.10" fill="#ffffff"/>
<rect x="551.70" y="78.30" width="5.70" height="4.10" fill="#ffffff"/>
<rect x="558.70" y="78.30" width="5.90" height="4.10" fill="#ffffff"/>
<rect x="565.90" y="78.30" width="5.90" height="4.10" fill="#ffffff"/>
<path d="M572.1 58.1 V82.9" stroke="#3c4c96" stroke-width="1"/>
<path d="M544.2 82.6 H572.3" stroke="#4c5a9a" stroke-width="0.9"/>
<rect x="609.8" y="52.5" width="15.4" height="13.2" fill="url(#lb)" stroke="#8c9cb8" stroke-width="0.8"/>
<path d="M609.6 66H625.6V52.4" stroke="#6676a0" stroke-width="1" fill="none"/>
<text x="617.6" y="63.9" text-anchor="middle" font-family="Liberation Sans, sans-serif" font-weight="bold" font-size="12.5" fill="#e0144c">A</text>
<rect x="594.1" y="70.4" width="15" height="13.6" fill="url(#lb)" stroke="#8c9cb8" stroke-width="0.8"/>
<path d="M593.9 84.3H609.5V70.2" stroke="#6676a0" stroke-width="1" fill="none"/>
<text x="601.6" y="82" text-anchor="middle" font-family="Liberation Sans, sans-serif" font-weight="bold" font-size="13" fill="#e0144c">1</text>
<path d="M620.5 67.3 L624.6 72.2 L622 72.2 L622 83.4 L619.2 83.4 L619.2 79.6 Q618.6 78.2 616.2 78.4 L616.2 80.4 L611 77 L616.2 73.4 L616.2 75.4 Q618.4 75.4 619.2 76.2 L619.2 72.2 L616.6 72.2Z" fill="#c67cd6" stroke="#9a48ac" stroke-width="0.7" stroke-linejoin="round"/>
<path d="M620.6 70v12" stroke="#e8c0f0" stroke-width="0.8"/>
<circle cx="653.7" cy="72.5" r="10.2" fill="url(#c2)" stroke="#9a9ea8" stroke-width="1.2"/>
<circle cx="643.9" cy="63.4" r="10.2" fill="url(#c1)" fill-opacity="0.82" stroke="#a4a8b0" stroke-width="1.2"/>
<circle cx="653.7" cy="72.5" r="10.2" fill="none" stroke="#9a9ea8" stroke-width="1.2"/>
<rect x="674.2" y="52.9" width="30.8" height="30.5" fill="#e4eefa" stroke="#484850" stroke-width="1.5"/>
<rect x="675" y="53.7" width="29.2" height="13.6" fill="url(#sb)"/>
<circle cx="693.7" cy="72.5" r="10" fill="#a8cc34"/>
<circle cx="693.7" cy="71.4" r="8.6" fill="#b8d42c" opacity="0.8"/>
<path d="M691.8 67.4h3.8v2.9h2.9v3.8h-2.9v2.9h-3.8v-2.9h-2.9v-3.8h2.9Z" fill="#2a2a32" stroke="#5a4a1a" stroke-width="0.5"/>
</svg>
<div id="grid">
<div id="rhbg"></div><div id="vl0"></div><div id="ybg"></div>
<div class="hc clip" style="left:81.0px;width:33.0px"><span class="ht r">E</span></div>
<div class="hc " style="left:115.0px;width:108.0px"><span class="hi"><svg class="ic rl" width="17" height="16" viewBox="0 0 17 16"><polygon points="12.9,0.7 15.5,3.5 3.4,14.8 0.8,12" fill="#f2cc20" stroke="#4e4a38" stroke-width="1.25" stroke-linejoin="round"/><path d="M3.4 9.7l1.3 1.4M5.9 7.4l1.3 1.4M8.4 5.1l1.3 1.4M10.9 2.8l1.3 1.4" stroke="#5a5430" stroke-width="1"/><path d="M4.4 12.4l0.9-0.9M6.9 10.1l0.9-0.9M9.4 7.8l0.9-0.9M11.9 5.5l1-1" stroke="#fba93a" stroke-width="1.2"/></svg><span class="hw" style="width:40.54px"><span class="ht" style="transform:scale(0.868,1)">Q10_E</span></span></span></div>
<div class="hc " style="left:224.0px;width:82.0px"><span class="hi"><svg class="ic rl" width="17" height="16" viewBox="0 0 17 16"><polygon points="12.9,0.7 15.5,3.5 3.4,14.8 0.8,12" fill="#f2cc20" stroke="#4e4a38" stroke-width="1.25" stroke-linejoin="round"/><path d="M3.4 9.7l1.3 1.4M5.9 7.4l1.3 1.4M8.4 5.1l1.3 1.4M10.9 2.8l1.3 1.4" stroke="#5a5430" stroke-width="1"/><path d="M4.4 12.4l0.9-0.9M6.9 10.1l0.9-0.9M9.4 7.8l0.9-0.9M11.9 5.5l1-1" stroke="#fba93a" stroke-width="1.2"/></svg><span class="hw" style="width:34.66px"><span class="ht" style="transform:scale(0.872,1)">Q11_I</span></span></span></div>
<div class="hc " style="left:307.0px;width:108.0px"><span class="hi"><svg class="ic rl" width="17" height="16" viewBox="0 0 17 16"><polygon points="12.9,0.7 15.5,3.5 3.4,14.8 0.8,12" fill="#f2cc20" stroke="#4e4a38" stroke-width="1.25" stroke-linejoin="round"/><path d="M3.4 9.7l1.3 1.4M5.9 7.4l1.3 1.4M8.4 5.1l1.3 1.4M10.9 2.8l1.3 1.4" stroke="#5a5430" stroke-width="1"/><path d="M4.4 12.4l0.9-0.9M6.9 10.1l0.9-0.9M9.4 7.8l0.9-0.9M11.9 5.5l1-1" stroke="#fba93a" stroke-width="1.2"/></svg><span class="hw" style="width:40.54px"><span class="ht" style="transform:scale(0.868,1)">Q12_E</span></span></span></div>
<div class="hc " style="left:416.0px;width:108.0px"><span class="hi"><svg class="ic rl" width="17" height="16" viewBox="0 0 17 16"><polygon points="12.9,0.7 15.5,3.5 3.4,14.8 0.8,12" fill="#f2cc20" stroke="#4e4a38" stroke-width="1.25" stroke-linejoin="round"/><path d="M3.4 9.7l1.3 1.4M5.9 7.4l1.3 1.4M8.4 5.1l1.3 1.4M10.9 2.8l1.3 1.4" stroke="#5a5430" stroke-width="1"/><path d="M4.4 12.4l0.9-0.9M6.9 10.1l0.9-0.9M9.4 7.8l0.9-0.9M11.9 5.5l1-1" stroke="#fba93a" stroke-width="1.2"/></svg><span class="hw" style="width:35.63px"><span class="ht" style="transform:scale(0.872,1)">Q13_I</span></span></span></div>
<div class="hc " style="left:525.0px;width:81.0px"><span class="hi"><svg class="ic rl" width="17" height="16" viewBox="0 0 17 16"><polygon points="12.9,0.7 15.5,3.5 3.4,14.8 0.8,12" fill="#f2cc20" stroke="#4e4a38" stroke-width="1.25" stroke-linejoin="round"/><path d="M3.4 9.7l1.3 1.4M5.9 7.4l1.3 1.4M8.4 5.1l1.3 1.4M10.9 2.8l1.3 1.4" stroke="#5a5430" stroke-width="1"/><path d="M4.4 12.4l0.9-0.9M6.9 10.1l0.9-0.9M9.4 7.8l0.9-0.9M11.9 5.5l1-1" stroke="#fba93a" stroke-width="1.2"/></svg><span class="hw" style="width:40.54px"><span class="ht" style="transform:scale(0.868,1)">Q14_E</span></span></span></div>
<div class="hc " style="left:607.0px;width:109.0px"><span class="hi"><svg class="ic rl" width="17" height="16" viewBox="0 0 17 16"><polygon points="12.9,0.7 15.5,3.5 3.4,14.8 0.8,12" fill="#f2cc20" stroke="#4e4a38" stroke-width="1.25" stroke-linejoin="round"/><path d="M3.4 9.7l1.3 1.4M5.9 7.4l1.3 1.4M8.4 5.1l1.3 1.4M10.9 2.8l1.3 1.4" stroke="#5a5430" stroke-width="1"/><path d="M4.4 12.4l0.9-0.9M6.9 10.1l0.9-0.9M9.4 7.8l0.9-0.9M11.9 5.5l1-1" stroke="#fba93a" stroke-width="1.2"/></svg><span class="hw" style="width:40.54px"><span class="ht" style="transform:scale(0.868,1)">Q15_S</span></span></span></div>
<div class="hc " style="left:717.0px;width:180.0px"><span class="hi" style="left:-2.2px"><svg class="ic rl" width="17" height="16" viewBox="0 0 17 16"><polygon points="12.9,0.7 15.5,3.5 3.4,14.8 0.8,12" fill="#f2cc20" stroke="#4e4a38" stroke-width="1.25" stroke-linejoin="round"/><path d="M3.4 9.7l1.3 1.4M5.9 7.4l1.3 1.4M8.4 5.1l1.3 1.4M10.9 2.8l1.3 1.4" stroke="#5a5430" stroke-width="1"/><path d="M4.4 12.4l0.9-0.9M6.9 10.1l0.9-0.9M9.4 7.8l0.9-0.9M11.9 5.5l1-1" stroke="#fba93a" stroke-width="1.2"/></svg><span class="hw" style="width:103.95px"><span class="ht" style="transform:scale(0.872,1)">Neuroticism_Total</span></span></span></div>
<div class="hc " style="left:898.0px;width:162.0px"><span class="hi" style="left:-1.3px"><svg class="ic" width="16.3" height="16.3" viewBox="0 0 17 17"><defs><radialGradient id="gb" cx="0.4" cy="0.35" r="0.7"><stop offset="0" stop-color="#cfe4ff"/><stop offset="1" stop-color="#4f86d6"/></radialGradient><radialGradient id="gr" cx="0.4" cy="0.35" r="0.7"><stop offset="0" stop-color="#ff8a8a"/><stop offset="1" stop-color="#c4121c"/></radialGradient><radialGradient id="gg" cx="0.4" cy="0.35" r="0.7"><stop offset="0" stop-color="#d6f0b8"/><stop offset="1" stop-color="#6aa644"/></radialGradient></defs><circle cx="8.6" cy="4.6" r="3.9" fill="url(#gb)" stroke="#4779c4" stroke-width="0.7"/><circle cx="4.6" cy="11.6" r="4.1" fill="url(#gr)" stroke="#b01018" stroke-width="0.7"/><circle cx="12.2" cy="12" r="4" fill="url(#gg)" stroke="#5c9438" stroke-width="0.7"/></svg><span class="hw" style="width:80.98px"><span class="ht" style="transform:scale(0.875,1)">Stability_Total</span></span></span></div>
<div class="hc " style="left:1061.0px;width:180.0px"><span class="hi"><svg class="ic" width="16.3" height="16.3" viewBox="0 0 17 17"><defs><radialGradient id="gb" cx="0.4" cy="0.35" r="0.7"><stop offset="0" stop-color="#cfe4ff"/><stop offset="1" stop-color="#4f86d6"/></radialGradient><radialGradient id="gr" cx="0.4" cy="0.35" r="0.7"><stop offset="0" stop-color="#ff8a8a"/><stop offset="1" stop-color="#c4121c"/></radialGradient><radialGradient id="gg" cx="0.4" cy="0.35" r="0.7"><stop offset="0" stop-color="#d6f0b8"/><stop offset="1" stop-color="#6aa644"/></radialGradient></defs><circle cx="8.6" cy="4.6" r="3.9" fill="url(#gb)" stroke="#4779c4" stroke-width="0.7"/><circle cx="4.6" cy="11.6" r="4.1" fill="url(#gr)" stroke="#b01018" stroke-width="0.7"/><circle cx="12.2" cy="12" r="4" fill="url(#gg)" stroke="#5c9438" stroke-width="0.7"/></svg><span class="hw" style="width:96.87px"><span class="ht" style="transform:scale(0.848,1)">Inroversion_Total</span></span></span></div>
<div class="hc sel" style="left:1242.0px;width:188.0px"><span class="hi"><svg class="ic" width="16.3" height="16.3" viewBox="0 0 17 17"><defs><radialGradient id="gb" cx="0.4" cy="0.35" r="0.7"><stop offset="0" stop-color="#cfe4ff"/><stop offset="1" stop-color="#4f86d6"/></radialGradient><radialGradient id="gr" cx="0.4" cy="0.35" r="0.7"><stop offset="0" stop-color="#ff8a8a"/><stop offset="1" stop-color="#c4121c"/></radialGradient><radialGradient id="gg" cx="0.4" cy="0.35" r="0.7"><stop offset="0" stop-color="#d6f0b8"/><stop offset="1" stop-color="#6aa644"/></radialGradient></defs><circle cx="8.6" cy="4.6" r="3.9" fill="url(#gb)" stroke="#4779c4" stroke-width="0.7"/><circle cx="4.6" cy="11.6" r="4.1" fill="url(#gr)" stroke="#b01018" stroke-width="0.7"/><circle cx="12.2" cy="12" r="4" fill="url(#gg)" stroke="#5c9438" stroke-width="0.7"/></svg><span class="hw" style="width:106.12px"><span class="ht">Extroversion_Total</span></span></span></div>
<div class="corner"></div>
<div class="row" style="top:24px;transform:translateY(0.200px)"><div class="rh"><span class="t">1</span></div><div class="c" style="left:81.0px;width:34.0px"><span class="t">2</span></div><div class="c" style="left:115.0px;width:109.0px"><span class="t">2</span></div><div class="c" style="left:224.0px;width:82.0px"><span class="t">2</span></div><div class="c" style="left:306.0px;width:109.0px"><span class="t">2</span></div><div class="c" style="left:415.0px;width:109.0px"><span class="t">2</span></div><div class="c" style="left:524.0px;width:83.0px"><span class="t">2</span></div><div class="c" style="left:607.0px;width:109.0px"><span class="t">2</span></div><div class="c" style="left:716.0px;width:181.0px"><span class="t">4.00</span></div><div class="c" style="left:897.0px;width:163.0px"><span class="t">6.00</span></div><div class="c" style="left:1060.0px;width:181.0px"><span class="t">6.00</span></div><div class="c y" style="left:1241.0px;width:189.0px"><span class="t">14.00</span></div></div>
<div class="row" style="top:46px;transform:translateY(0.240px)"><div class="rh"><span class="t">2</span></div><div class="c" style="left:81.0px;width:34.0px"><span class="t">4</span></div><div class="c" style="left:115.0px;width:109.0px"><span class="t">4</span></div><div class="c" style="left:224.0px;width:82.0px"><span class="t">4</span></div><div class="c" style="left:306.0px;width:109.0px"><span class="t">4</span></div><div class="c" style="left:415.0px;width:109.0px"><span class="t">4</span></div><div class="c" style="left:524.0px;width:83.0px"><span class="t">4</span></div><div class="c" style="left:607.0px;width:109.0px"><span class="t">4</span></div><div class="c" style="left:716.0px;width:181.0px"><span class="t">9.00</span></div><div class="c" style="left:897.0px;width:163.0px"><span class="t">12.00</span></div><div class="c" style="left:1060.0px;width:181.0px"><span class="t">12.00</span></div><div class="c y" style="left:1241.0px;width:189.0px"><span class="t">28.00</span></div></div>
<div class="row" style="top:68px;transform:translateY(0.280px)"><div class="rh"><span class="t">3</span></div><div class="c" style="left:81.0px;width:34.0px"><span class="t">7</span></div><div class="c" style="left:115.0px;width:109.0px"><span class="t">7</span></div><div class="c" style="left:224.0px;width:82.0px"><span class="t">7</span></div><div class="c" style="left:306.0px;width:109.0px"><span class="t">7</span></div><div class="c" style="left:415.0px;width:109.0px"><span class="t">7</span></div><div class="c" style="left:524.0px;width:83.0px"><span class="t">7</span></div><div class="c" style="left:607.0px;width:109.0px"><span class="t">7</span></div><div class="c" style="left:716.0px;width:181.0px"><span class="t">14.00</span></div><div class="c" style="left:897.0px;width:163.0px"><span class="t">21.00</span></div><div class="c" style="left:1060.0px;width:181.0px"><span class="t">21.00</span></div><div class="c y" style="left:1241.0px;width:189.0px"><span class="t">49.00</span></div></div>
<div class="row" style="top:90px;transform:translateY(0.320px)"><div class="rh"><span class="t">4</span></div><div class="c" style="left:81.0px;width:34.0px"><span class="t">4</span></div><div class="c" style="left:115.0px;width:109.0px"><span class="t">4</span></div><div class="c" style="left:224.0px;width:82.0px"><span class="t">4</span></div><div class="c" style="left:306.0px;width:109.0px"><span class="t">4</span></div><div class="c" style="left:415.0px;width:109.0px"><span class="t">4</span></div><div class="c" style="left:524.0px;width:83.0px"><span class="t">4</span></div><div class="c" style="left:607.0px;width:109.0px"><span class="t">4</span></div><div class="c" style="left:716.0px;width:181.0px"><span class="t">11.00</span></div><div class="c" style="left:897.0px;width:163.0px"><span class="t">12.00</span></div><div class="c" style="left:1060.0px;width:181.0px"><span class="t">12.00</span></div><div class="c y" style="left:1241.0px;width:189.0px"><span class="t">28.00</span></div></div>
<div class="row" style="top:112px;transform:translateY(0.360px)"><div class="rh"><span class="t">5</span></div><div class="c" style="left:81.0px;width:34.0px"><span class="t">4</span></div><div class="c" style="left:115.0px;width:109.0px"><span class="t">4</span></div><div class="c" style="left:224.0px;width:82.0px"><span class="t">4</span></div><div class="c" style="left:306.0px;width:109.0px"><span class="t">4</span></div><div class="c" style="left:415.0px;width:109.0px"><span class="t">4</span></div><div class="c" style="left:524.0px;width:83.0px"><span class="t">4</span></div><div class="c" style="left:607.0px;width:109.0px"><span class="t">4</span></div><div class="c" style="left:716.0px;width:181.0px"><span class="t">8.00</span></div><div class="c" style="left:897.0px;width:163.0px"><span class="t">12.00</span></div><div class="c" style="left:1060.0px;width:181.0px"><span class="t">12.00</span></div><div class="c y" style="left:1241.0px;width:189.0px"><span class="t">28.00</span></div></div>
<div class="row" style="top:134px;transform:translateY(0.400px)"><div class="rh"><span class="t">6</span></div><div class="c" style="left:81.0px;width:34.0px"><span class="t">2</span></div><div class="c" style="left:115.0px;width:109.0px"><span class="t">2</span></div><div class="c" style="left:224.0px;width:82.0px"><span class="t">2</span></div><div class="c" style="left:306.0px;width:109.0px"><span class="t">2</span></div><div class="c" style="left:415.0px;width:109.0px"><span class="t">2</span></div><div class="c" style="left:524.0px;width:83.0px"><span class="t">2</span></div><div class="c" style="left:607.0px;width:109.0px"><span class="t">2</span></div><div class="c" style="left:716.0px;width:181.0px"><span class="t">7.00</span></div><div class="c" style="left:897.0px;width:163.0px"><span class="t">6.00</span></div><div class="c" style="left:1060.0px;width:181.0px"><span class="t">6.00</span></div><div class="c y" style="left:1241.0px;width:189.0px"><span class="t">14.00</span></div></div>
<div class="row" style="top:156px;transform:translateY(0.440px)"><div class="rh"><span class="t">7</span></div><div class="c" style="left:81.0px;width:34.0px"><span class="t">2</span></div><div class="c" style="left:115.0px;width:109.0px"><span class="t">2</span></div><div class="c" style="left:224.0px;width:82.0px"><span class="t">2</span></div><div class="c" style="left:306.0px;width:109.0px"><span class="t">2</span></div><div class="c" style="left:415.0px;width:109.0px"><span class="t">2</span></div><div class="c" style="left:524.0px;width:83.0px"><span class="t">2</span></div><div class="c" style="left:607.0px;width:109.0px"><span class="t">2</span></div><div class="c" style="left:716.0px;width:181.0px"><span class="t">4.00</span></div><div class="c" style="left:897.0px;width:163.0px"><span class="t">6.00</span></div><div class="c" style="left:1060.0px;width:181.0px"><span class="t">6.00</span></div><div class="c y" style="left:1241.0px;width:189.0px"><span class="t">14.00</span></div></div>
<div class="row" style="top:178px;transform:translateY(0.480px)"><div class="rh"><span class="t">8</span></div><div class="c" style="left:81.0px;width:34.0px"><span class="t">6</span></div><div class="c" style="left:115.0px;width:109.0px"><span class="t">6</span></div><div class="c" style="left:224.0px;width:82.0px"><span class="t">6</span></div><div class="c" style="left:306.0px;width:109.0px"><span class="t">6</span></div><div class="c" style="left:415.0px;width:109.0px"><span class="t">6</span></div><div class="c" style="left:524.0px;width:83.0px"><span class="t">6</span></div><div class="c" style="left:607.0px;width:109.0px"><span class="t">6</span></div><div class="c" style="left:716.0px;width:181.0px"><span class="t">10.00</span></div><div class="c" style="left:897.0px;width:163.0px"><span class="t">18.00</span></div><div class="c" style="left:1060.0px;width:181.0px"><span class="t">18.00</span></div><div class="c y" style="left:1241.0px;width:189.0px"><span class="t">42.00</span></div></div>
<div class="row" style="top:200px;transform:translateY(0.520px)"><div class="rh"><span class="t">9</span></div><div class="c" style="left:81.0px;width:34.0px"><span class="t">6</span></div><div class="c" style="left:115.0px;width:109.0px"><span class="t">6</span></div><div class="c" style="left:224.0px;width:82.0px"><span class="t">6</span></div><div class="c" style="left:306.0px;width:109.0px"><span class="t">6</span></div><div class="c" style="left:415.0px;width:109.0px"><span class="t">6</span></div><div class="c" style="left:524.0px;width:83.0px"><span class="t">6</span></div><div class="c" style="left:607.0px;width:109.0px"><span class="t">6</span></div><div class="c" style="left:716.0px;width:181.0px"><span class="t">12.00</span></div><div class="c" style="left:897.0px;width:163.0px"><span class="t">18.00</span></div><div class="c" style="left:1060.0px;width:181.0px"><span class="t">18.00</span></div><div class="c y" style="left:1241.0px;width:189.0px"><span class="t">42.00</span></div></div>
<div class="row" style="top:222px;transform:translateY(0.560px)"><div class="rh"><span class="t">10</span></div><div class="c" style="left:81.0px;width:34.0px"><span class="t">0</span></div><div class="c" style="left:115.0px;width:109.0px"><span class="t">0</span></div><div class="c" style="left:224.0px;width:82.0px"><span class="t">0</span></div><div class="c" style="left:306.0px;width:109.0px"><span class="t">0</span></div><div class="c" style="left:415.0px;width:109.0px"><span class="t">0</span></div><div class="c" style="left:524.0px;width:83.0px"><span class="t">0</span></div><div class="c" style="left:607.0px;width:109.0px"><span class="t">0</span></div><div class="c" style="left:716.0px;width:181.0px"><span class="t">7.00</span></div><div class="c" style="left:897.0px;width:163.0px"><span class="t">.00</span></div><div class="c" style="left:1060.0px;width:181.0px"><span class="t">.00</span></div><div class="c y" style="left:1241.0px;width:189.0px"><span class="t">.00</span></div></div>
<div class="row" style="top:244px;transform:translateY(0.600px)"><div class="rh"><span class="t">11</span></div><div class="c" style="left:81.0px;width:34.0px"><span class="t">6</span></div><div class="c" style="left:115.0px;width:109.0px"><span class="t">6</span></div><div class="c" style="left:224.0px;width:82.0px"><span class="t">6</span></div><div class="c" style="left:306.0px;width:109.0px"><span class="t">6</span></div><div class="c" style="left:415.0px;width:109.0px"><span class="t">6</span></div><div class="c" style="left:524.0px;width:83.0px"><span class="t">6</span></div><div class="c" style="left:607.0px;width:109.0px"><span class="t">6</span></div><div class="c" style="left:716.0px;width:181.0px"><span class="t">14.00</span></div><div class="c" style="left:897.0px;width:163.0px"><span class="t">18.00</span></div><div class="c" style="left:1060.0px;width:181.0px"><span class="t">18.00</span></div><div class="c y" style="left:1241.0px;width:189.0px"><span class="t">42.00</span></div></div>
<div class="row" style="top:266px;transform:translateY(0.640px)"><div class="rh"><span class="t">12</span></div><div class="c" style="left:81.0px;width:34.0px"><span class="t">7</span></div><div class="c" style="left:115.0px;width:109.0px"><span class="t">7</span></div><div class="c" style="left:224.0px;width:82.0px"><span class="t">7</span></div><div class="c" style="left:306.0px;width:109.0px"><span class="t">7</span></div><div class="c" style="left:415.0px;width:109.0px"><span class="t">7</span></div><div class="c" style="left:524.0px;width:83.0px"><span class="t">7</span></div><div class="c" style="left:607.0px;width:109.0px"><span class="t">7</span></div><div class="c" style="left:716.0px;width:181.0px"><span class="t">14.00</span></div><div class="c" style="left:897.0px;width:163.0px"><span class="t">21.00</span></div><div class="c" style="left:1060.0px;width:181.0px"><span class="t">21.00</span></div><div class="c y" style="left:1241.0px;width:189.0px"><span class="t">49.00</span></div></div>
<div class="row" style="top:288px;transform:translateY(0.680px)"><div class="rh"><span class="t">13</span></div><div class="c" style="left:81.0px;width:34.0px"><span class="t">6</span></div><div class="c" style="left:115.0px;width:109.0px"><span class="t">6</span></div><div class="c" style="left:224.0px;width:82.0px"><span class="t">6</span></div><div class="c" style="left:306.0px;width:109.0px"><span class="t">6</span></div><div class="c" style="left:415.0px;width:109.0px"><span class="t">6</span></div><div class="c" style="left:524.0px;width:83.0px"><span class="t">6</span></div><div class="c" style="left:607.0px;width:109.0px"><span class="t">6</span></div><div class="c" style="left:716.0px;width:181.0px"><span class="t">11.00</span></div><div class="c" style="left:897.0px;width:163.0px"><span class="t">18.00</span></div><div class="c" style="left:1060.0px;width:181.0px"><span class="t">18.00</span></div><div class="c y" style="left:1241.0px;width:189.0px"><span class="t">42.00</span></div></div>
<div class="row" style="top:310px;transform:translateY(0.720px)"><div class="rh"><span class="t">14</span></div><div class="c" style="left:81.0px;width:34.0px"><span class="t">4</span></div><div class="c" style="left:115.0px;width:109.0px"><span class="t">4</span></div><div class="c" style="left:224.0px;width:82.0px"><span class="t">4</span></div><div class="c" style="left:306.0px;width:109.0px"><span class="t">4</span></div><div class="c" style="left:415.0px;width:109.0px"><span class="t">4</span></div><div class="c" style="left:524.0px;width:83.0px"><span class="t">4</span></div><div class="c" style="left:607.0px;width:109.0px"><span class="t">4</span></div><div class="c" style="left:716.0px;width:181.0px"><span class="t">8.00</span></div><div class="c" style="left:897.0px;width:163.0px"><span class="t">12.00</span></div><div class="c" style="left:1060.0px;width:181.0px"><span class="t">12.00</span></div><div class="c y" style="left:1241.0px;width:189.0px"><span class="t">28.00</span></div></div>
<div class="row" style="top:332px;transform:translateY(0.760px)"><div class="rh"><span class="t">15</span></div><div class="c" style="left:81.0px;width:34.0px"><span class="t">3</span></div><div class="c" style="left:115.0px;width:109.0px"><span class="t">3</span></div><div class="c" style="left:224.0px;width:82.0px"><span class="t">3</span></div><div class="c" style="left:306.0px;width:109.0px"><span class="t">3</span></div><div class="c" style="left:415.0px;width:109.0px"><span class="t">3</span></div><div class="c" style="left:524.0px;width:83.0px"><span class="t">3</span></div><div class="c" style="left:607.0px;width:109.0px"><span class="t">3</span></div><div class="c" style="left:716.0px;width:181.0px"><span class="t">6.00</span></div><div class="c" style="left:897.0px;width:163.0px"><span class="t">9.00</span></div><div class="c" style="left:1060.0px;width:181.0px"><span class="t">9.00</span></div><div class="c y" style="left:1241.0px;width:189.0px"><span class="t">21.00</span></div></div>
<div class="row" style="top:354px;transform:translateY(0.800px)"><div class="rh"><span class="t">16</span></div><div class="c" style="left:81.0px;width:34.0px"><span class="t">5</span></div><div class="c" style="left:115.0px;width:109.0px"><span class="t">5</span></div><div class="c" style="left:224.0px;width:82.0px"><span class="t">5</span></div><div class="c" style="left:306.0px;width:109.0px"><span class="t">5</span></div><div class="c" style="left:415.0px;width:109.0px"><span class="t">5</span></div><div class="c" style="left:524.0px;width:83.0px"><span class="t">5</span></div><div class="c" style="left:607.0px;width:109.0px"><span class="t">5</span></div><div class="c" style="left:716.0px;width:181.0px"><span class="t">10.00</span></div><div class="c" style="left:897.0px;width:163.0px"><span class="t">15.00</span></div><div class="c" style="left:1060.0px;width:181.0px"><span class="t">15.00</span></div><div class="c y" style="left:1241.0px;width:189.0px"><span class="t">35.00</span></div></div>
<div class="row" style="top:376px;transform:translateY(0.840px)"><div class="rh"><span class="t">17</span></div><div class="c" style="left:81.0px;width:34.0px"><span class="t">9</span></div><div class="c" style="left:115.0px;width:109.0px"><span class="t">9</span></div><div class="c" style="left:224.0px;width:82.0px"><span class="t">9</span></div><div class="c" style="left:306.0px;width:109.0px"><span class="t">9</span></div><div class="c" style="left:415.0px;width:109.0px"><span class="t">9</span></div><div class="c" style="left:524.0px;width:83.0px"><span class="t">9</span></div><div class="c" style="left:607.0px;width:109.0px"><span class="t">9</span></div><div class="c" style="left:716.0px;width:181.0px"><span class="t">12.00</span></div><div class="c" style="left:897.0px;width:163.0px"><span class="t">27.00</span></div><div class="c" style="left:1060.0px;width:181.0px"><span class="t">27.00</span></div><div class="c y" style="left:1241.0px;width:189.0px"><span class="t">63.00</span></div></div>
<div class="row" style="top:398px;transform:translateY(0.880px)"><div class="rh"><span class="t">18</span></div><div class="c" style="left:81.0px;width:34.0px"><span class="t">5</span></div><div class="c" style="left:115.0px;width:109.0px"><span class="t">5</span></div><div class="c" style="left:224.0px;width:82.0px"><span class="t">5</span></div><div class="c" style="left:306.0px;width:109.0px"><span class="t">5</span></div><div class="c" style="left:415.0px;width:109.0px"><span class="t">5</span></div><div class="c" style="left:524.0px;width:83.0px"><span class="t">5</span></div><div class="c" style="left:607.0px;width:109.0px"><span class="t">5</span></div><div class="c" style="left:716.0px;width:181.0px"><span class="t">10.00</span></div><div class="c" style="left:897.0px;width:163.0px"><span class="t">15.00</span></div><div class="c" style="left:1060.0px;width:181.0px"><span class="t">15.00</span></div><div class="c y" style="left:1241.0px;width:189.0px"><span class="t">35.00</span></div></div>
<div class="row" style="top:420px;transform:translateY(0.920px)"><div class="rh"><span class="t">19</span></div><div class="c" style="left:81.0px;width:34.0px"><span class="t">8</span></div><div class="c" style="left:115.0px;width:109.0px"><span class="t">8</span></div><div class="c" style="left:224.0px;width:82.0px"><span class="t">8</span></div><div class="c" style="left:306.0px;width:109.0px"><span class="t">8</span></div><div class="c" style="left:415.0px;width:109.0px"><span class="t">8</span></div><div class="c" style="left:524.0px;width:83.0px"><span class="t">8</span></div><div class="c" style="left:607.0px;width:109.0px"><span class="t">8</span></div><div class="c" style="left:716.0px;width:181.0px"><span class="t">15.00</span></div><div class="c" style="left:897.0px;width:163.0px"><span class="t">24.00</span></div><div class="c" style="left:1060.0px;width:181.0px"><span class="t">24.00</span></div><div class="c y" style="left:1241.0px;width:189.0px"><span class="t">56.00</span></div></div>
<div class="row" style="top:442px;transform:translateY(0.960px)"><div class="rh"><span class="t">20</span></div><div class="c" style="left:81.0px;width:34.0px"><span class="t">4</span></div><div class="c" style="left:115.0px;width:109.0px"><span class="t">4</span></div><div class="c" style="left:224.0px;width:82.0px"><span class="t">4</span></div><div class="c" style="left:306.0px;width:109.0px"><span class="t">4</span></div><div class="c" style="left:415.0px;width:109.0px"><span class="t">4</span></div><div class="c" style="left:524.0px;width:83.0px"><span class="t">4</span></div><div class="c" style="left:607.0px;width:109.0px"><span class="t">4</span></div><div class="c" style="left:716.0px;width:181.0px"><span class="t">8.00</span></div><div class="c" style="left:897.0px;width:163.0px"><span class="t">12.00</span></div><div class="c" style="left:1060.0px;width:181.0px"><span class="t">12.00</span></div><div class="c y" style="left:1241.0px;width:189.0px"><span class="t">28.00</span></div></div>
<div class="row" style="top:465px;transform:translateY(0.000px)"><div class="rh"><span class="t">21</span></div><div class="c" style="left:81.0px;width:34.0px"><span class="t">5</span></div><div class="c" style="left:115.0px;width:109.0px"><span class="t">5</span></div><div class="c" style="left:224.0px;width:82.0px"><span class="t">5</span></div><div class="c" style="left:306.0px;width:109.0px"><span class="t">5</span></div><div class="c" style="left:415.0px;width:109.0px"><span class="t">5</span></div><div class="c" style="left:524.0px;width:83.0px"><span class="t">5</span></div><div class="c" style="left:607.0px;width:109.0px"><span class="t">5</span></div><div class="c" style="left:716.0px;width:181.0px"><span class="t">9.00</span></div><div class="c" style="left:897.0px;width:163.0px"><span class="t">15.00</span></div><div class="c" style="left:1060.0px;width:181.0px"><span class="t">15.00</span></div><div class="c y" style="left:1241.0px;width:189.0px"><span class="t">35.00</span></div></div>
<div class="row" style="top:487px;transform:translateY(0.040px)"><div class="rh"><span class="t">22</span></div><div class="c" style="left:81.0px;width:34.0px"><span class="t">3</span></div><div class="c" style="left:115.0px;width:109.0px"><span class="t">3</span></div><div class="c" style="left:224.0px;width:82.0px"><span class="t">3</span></div><div class="c" style="left:306.0px;width:109.0px"><span class="t">3</span></div><div class="c" style="left:415.0px;width:109.0px"><span class="t">3</span></div><div class="c" style="left:524.0px;width:83.0px"><span class="t">3</span></div><div class="c" style="left:607.0px;width:109.0px"><span class="t">3</span></div><div class="c" style="left:716.0px;width:181.0px"><span class="t">6.00</span></div><div class="c" style="left:897.0px;width:163.0px"><span class="t">9.00</span></div><div class="c" style="left:1060.0px;width:181.0px"><span class="t">9.00</span></div><div class="c y" style="left:1241.0px;width:189.0px"><span class="t">21.00</span></div></div>
<div class="row" style="top:509px;transform:translateY(0.080px)"><div class="rh"><span class="t">23</span></div><div class="c" style="left:81.0px;width:34.0px"><span class="t">3</span></div><div class="c" style="left:115.0px;width:109.0px"><span class="t">3</span></div><div class="c" style="left:224.0px;width:82.0px"><span class="t">3</span></div><div class="c" style="left:306.0px;width:109.0px"><span class="t">3</span></div><div class="c" style="left:415.0px;width:109.0px"><span class="t">3</span></div><div class="c" style="left:524.0px;width:83.0px"><span class="t">3</span></div><div class="c" style="left:607.0px;width:109.0px"><span class="t">3</span></div><div class="c" style="left:716.0px;width:181.0px"><span class="t">7.00</span></div><div class="c" style="left:897.0px;width:163.0px"><span class="t">9.00</span></div><div class="c" style="left:1060.0px;width:181.0px"><span class="t">9.00</span></div><div class="c y" style="left:1241.0px;width:189.0px"><span class="t">21.00</span></div></div>
<div class="row" style="top:531px;transform:translateY(0.120px)"><div class="rh"><span class="t">24</span></div><div class="c" style="left:81.0px;width:34.0px"><span class="t">7</span></div><div class="c" style="left:115.0px;width:109.0px"><span class="t">7</span></div><div class="c" style="left:224.0px;width:82.0px"><span class="t">7</span></div><div class="c" style="left:306.0px;width:109.0px"><span class="t">7</span></div><div class="c" style="left:415.0px;width:109.0px"><span class="t">7</span></div><div class="c" style="left:524.0px;width:83.0px"><span class="t">7</span></div><div class="c" style="left:607.0px;width:109.0px"><span class="t">7</span></div><div class="c" style="left:716.0px;width:181.0px"><span class="t">14.00</span></div><div class="c" style="left:897.0px;width:163.0px"><span class="t">21.00</span></div><div class="c" style="left:1060.0px;width:181.0px"><span class="t">21.00</span></div><div class="c y" style="left:1241.0px;width:189.0px"><span class="t">49.00</span></div></div>
<div class="row" style="top:553px;transform:translateY(0.160px)"><div class="rh"><span class="t">25</span></div><div class="c" style="left:81.0px;width:34.0px"><span class="t">2</span></div><div class="c" style="left:115.0px;width:109.0px"><span class="t">2</span></div><div class="c" style="left:224.0px;width:82.0px"><span class="t">2</span></div><div class="c" style="left:306.0px;width:109.0px"><span class="t">2</span></div><div class="c" style="left:415.0px;width:109.0px"><span class="t">2</span></div><div class="c" style="left:524.0px;width:83.0px"><span class="t">2</span></div><div class="c" style="left:607.0px;width:109.0px"><span class="t">2</span></div><div class="c" style="left:716.0px;width:181.0px"><span class="t">4.00</span></div><div class="c" style="left:897.0px;width:163.0px"><span class="t">6.00</span></div><div class="c" style="left:1060.0px;width:181.0px"><span class="t">6.00</span></div><div class="c y" style="left:1241.0px;width:189.0px"><span class="t">14.00</span></div></div>
<div class="row" style="top:575px;transform:translateY(0.200px)"><div class="rh"><span class="t">26</span></div><div class="c" style="left:81.0px;width:34.0px"><span class="t">4</span></div><div class="c" style="left:115.0px;width:109.0px"><span class="t">4</span></div><div class="c" style="left:224.0px;width:82.0px"><span class="t">4</span></div><div class="c" style="left:306.0px;width:109.0px"><span class="t">4</span></div><div class="c" style="left:415.0px;width:109.0px"><span class="t">4</span></div><div class="c" style="left:524.0px;width:83.0px"><span class="t">4</span></div><div class="c" style="left:607.0px;width:109.0px"><span class="t">4</span></div><div class="c" style="left:716.0px;width:181.0px"><span class="t">8.00</span></div><div class="c" style="left:897.0px;width:163.0px"><span class="t">12.00</span></div><div class="c" style="left:1060.0px;width:181.0px"><span class="t">12.00</span></div><div class="c y" style="left:1241.0px;width:189.0px"><span class="t">28.00</span></div></div>
<div class="row" style="top:597px;transform:translateY(0.240px)"><div class="rh"><span class="t">27</span></div><div class="c" style="left:81.0px;width:34.0px"><span class="t">2</span></div><div class="c" style="left:115.0px;width:109.0px"><span class="t">2</span></div><div class="c" style="left:224.0px;width:82.0px"><span class="t">2</span></div><div class="c" style="left:306.0px;width:109.0px"><span class="t">2</span></div><div class="c" style="left:415.0px;width:109.0px"><span class="t">2</span></div><div class="c" style="left:524.0px;width:83.0px"><span class="t">2</span></div><div class="c" style="left:607.0px;width:109.0px"><span class="t">2</span></div><div class="c" style="left:716.0px;width:181.0px"><span class="t">9.00</span></div><div class="c" style="left:897.0px;width:163.0px"><span class="t">6.00</span></div><div class="c" style="left:1060.0px;width:181.0px"><span class="t">6.00</span></div><div class="c y" style="left:1241.0px;width:189.0px"><span class="t">14.00</span></div></div>
<div class="row" style="top:619px;transform:translateY(0.280px)"><div class="rh"><span class="t">28</span></div><div class="c" style="left:81.0px;width:34.0px"><span class="t">8</span></div><div class="c" style="left:115.0px;width:109.0px"><span class="t">8</span></div><div class="c" style="left:224.0px;width:82.0px"><span class="t">8</span></div><div class="c" style="left:306.0px;width:109.0px"><span class="t">8</span></div><div class="c" style="left:415.0px;width:109.0px"><span class="t">8</span></div><div class="c" style="left:524.0px;width:83.0px"><span class="t">8</span></div><div class="c" style="left:607.0px;width:109.0px"><span class="t">8</span></div><div class="c" style="left:716.0px;width:181.0px"><span class="t">16.00</span></div><div class="c" style="left:897.0px;width:163.0px"><span class="t">24.00</span></div><div class="c" style="left:1060.0px;width:181.0px"><span class="t">24.00</span></div><div class="c y" style="left:1241.0px;width:189.0px"><span class="t">56.00</span></div></div>
<div class="selcell"></div>
</div>
<div id="botleft"></div>
<div id="hscroll"><div class="btn"></div><div class="thumb"></div><div class="rt"></div></div>
</body></html>
